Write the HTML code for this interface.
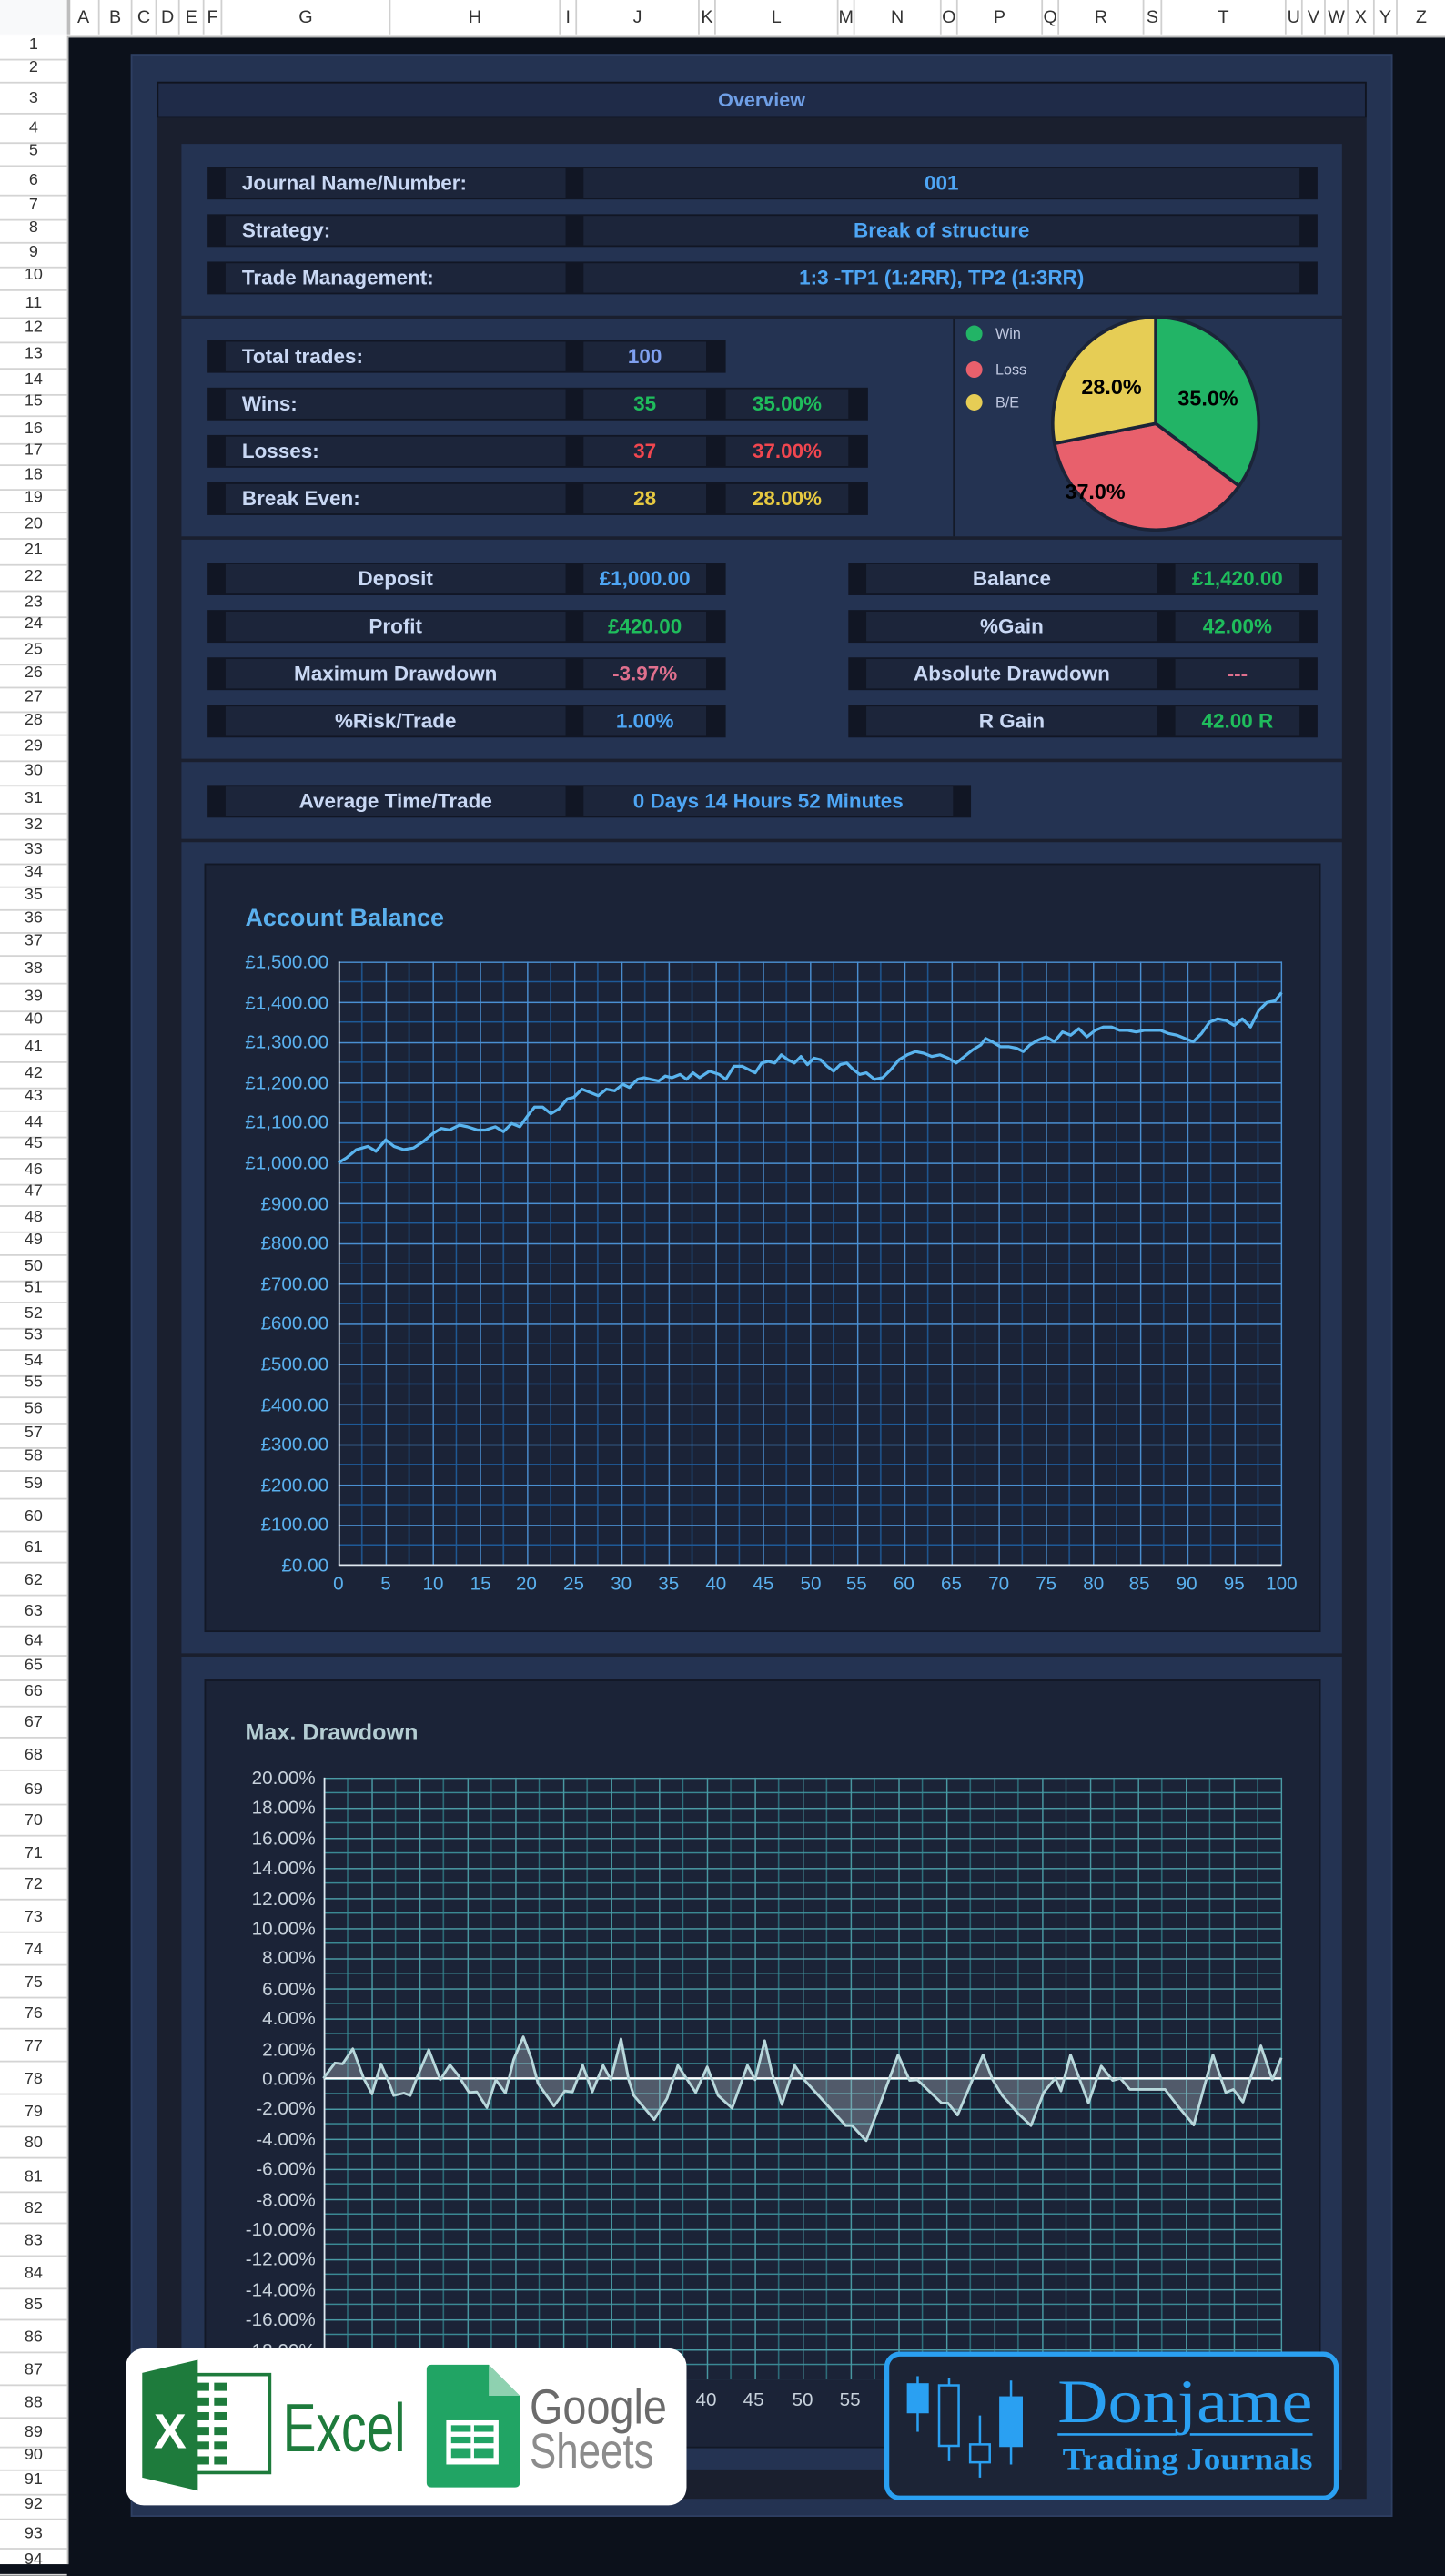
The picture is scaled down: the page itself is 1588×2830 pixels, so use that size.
<!DOCTYPE html>
<html><head><meta charset="utf-8">
<style>
html,body{margin:0;padding:0;width:1588px;height:2817px;overflow:hidden;background:#0c111b;}
#w{position:absolute;left:0;top:0;width:884px;height:1568px;transform:scale(1.79638,1.7966);transform-origin:0 0;font-family:"Liberation Sans Narrow","Liberation Sans",Arial,sans-serif;}
.a{position:absolute;}
.ch{position:absolute;top:0;height:21px;line-height:22px;text-align:center;font-size:11px;color:#333;border-right:1px solid #d0d0d0;font-family:"Liberation Sans Narrow","Liberation Sans",sans-serif;}
.rh{position:absolute;left:0;width:41px;height:16px;line-height:16px;text-align:center;font-size:10px;color:#333;border-bottom:1px solid #d4d4d4;}
.row{position:absolute;height:20px;background:#111624;}
.b{position:absolute;top:1px;bottom:1px;background:#1c253a;display:flex;align-items:center;justify-content:center;font-weight:bold;font-size:12.5px;color:#c9d8f4;white-space:nowrap;}
.l{justify-content:flex-start;padding-left:10px;box-sizing:border-box;}
.sec{position:absolute;left:111px;width:710px;background:#243352;}
.blue{color:#4ea6f5}.grn{color:#1fbd5c}.red{color:#f0464f}.yel{color:#e6c940}
</style></head><body><div id="w">
<!-- column header -->
<div class="a" style="left:0;top:0;width:884px;height:22px;background:#fff;border-bottom:1px solid #bdbdbd;"></div>
<div class="a" style="left:0;top:0;width:41px;height:21px;background:#f8f9fa;border-right:2px solid #bdbdbd;"></div>
<div class="ch" style="left:42px;width:18px">A</div>
<div class="ch" style="left:61px;width:19px">B</div>
<div class="ch" style="left:81px;width:14px">C</div>
<div class="ch" style="left:96px;width:13px">D</div>
<div class="ch" style="left:110px;width:14px">E</div>
<div class="ch" style="left:125px;width:10px">F</div>
<div class="ch" style="left:136px;width:102px">G</div>
<div class="ch" style="left:239px;width:103px">H</div>
<div class="ch" style="left:343px;width:9px">I</div>
<div class="ch" style="left:353px;width:74px">J</div>
<div class="ch" style="left:428px;width:9px">K</div>
<div class="ch" style="left:438px;width:74px">L</div>
<div class="ch" style="left:513px;width:9px">M</div>
<div class="ch" style="left:523px;width:52px">N</div>
<div class="ch" style="left:576px;width:9px">O</div>
<div class="ch" style="left:586px;width:51px">P</div>
<div class="ch" style="left:638px;width:9px">Q</div>
<div class="ch" style="left:648px;width:51px">R</div>
<div class="ch" style="left:700px;width:10px">S</div>
<div class="ch" style="left:711px;width:75px">T</div>
<div class="ch" style="left:787px;width:9px">U</div>
<div class="ch" style="left:797px;width:13px">V</div>
<div class="ch" style="left:811px;width:13px">W</div>
<div class="ch" style="left:825px;width:15px">X</div>
<div class="ch" style="left:841px;width:13px">Y</div>
<div class="ch" style="left:855px;width:29px;border-right:0">Z</div>
<!-- row header -->
<div class="a" style="left:0;top:22px;width:41px;height:1546px;background:#fff;border-right:1px solid #bdbdbd;"></div>
<div class="rh" style="top:20px">1</div><div class="rh" style="top:34px">2</div><div class="rh" style="top:53px">3</div><div class="rh" style="top:71px">4</div><div class="rh" style="top:85px">5</div><div class="rh" style="top:103px">6</div><div class="rh" style="top:118px">7</div><div class="rh" style="top:132px">8</div><div class="rh" style="top:147px">9</div><div class="rh" style="top:161px">10</div>
<div class="rh" style="top:178px">11</div><div class="rh" style="top:193px">12</div><div class="rh" style="top:209px">13</div><div class="rh" style="top:225px">14</div><div class="rh" style="top:238px">15</div><div class="rh" style="top:255px">16</div><div class="rh" style="top:268px">17</div><div class="rh" style="top:283px">18</div><div class="rh" style="top:297px">19</div><div class="rh" style="top:313px">20</div>
<div class="rh" style="top:329px">21</div><div class="rh" style="top:345px">22</div><div class="rh" style="top:361px">23</div><div class="rh" style="top:374px">24</div><div class="rh" style="top:390px">25</div><div class="rh" style="top:404px">26</div><div class="rh" style="top:419px">27</div><div class="rh" style="top:433px">28</div><div class="rh" style="top:449px">29</div><div class="rh" style="top:464px">30</div>
<div class="rh" style="top:481px">31</div><div class="rh" style="top:497px">32</div><div class="rh" style="top:512px">33</div><div class="rh" style="top:526px">34</div><div class="rh" style="top:540px">35</div><div class="rh" style="top:554px">36</div><div class="rh" style="top:568px">37</div><div class="rh" style="top:585px">38</div><div class="rh" style="top:602px">39</div><div class="rh" style="top:616px">40</div>
<div class="rh" style="top:633px">41</div><div class="rh" style="top:649px">42</div><div class="rh" style="top:663px">43</div><div class="rh" style="top:679px">44</div><div class="rh" style="top:692px">45</div><div class="rh" style="top:708px">46</div><div class="rh" style="top:721px">47</div><div class="rh" style="top:737px">48</div><div class="rh" style="top:751px">49</div><div class="rh" style="top:767px">50</div>
<div class="rh" style="top:780px">51</div><div class="rh" style="top:796px">52</div><div class="rh" style="top:809px">53</div><div class="rh" style="top:825px">54</div><div class="rh" style="top:838px">55</div><div class="rh" style="top:854px">56</div><div class="rh" style="top:869px">57</div><div class="rh" style="top:883px">58</div><div class="rh" style="top:900px">59</div><div class="rh" style="top:920px">60</div>
<div class="rh" style="top:939px">61</div><div class="rh" style="top:959px">62</div><div class="rh" style="top:978px">63</div><div class="rh" style="top:996px">64</div><div class="rh" style="top:1011px">65</div><div class="rh" style="top:1027px">66</div><div class="rh" style="top:1046px">67</div><div class="rh" style="top:1066px">68</div><div class="rh" style="top:1087px">69</div><div class="rh" style="top:1106px">70</div>
<div class="rh" style="top:1126px">71</div><div class="rh" style="top:1145px">72</div><div class="rh" style="top:1165px">73</div><div class="rh" style="top:1185px">74</div><div class="rh" style="top:1205px">75</div><div class="rh" style="top:1224px">76</div><div class="rh" style="top:1244px">77</div><div class="rh" style="top:1264px">78</div><div class="rh" style="top:1284px">79</div><div class="rh" style="top:1303px">80</div>
<div class="rh" style="top:1324px">81</div><div class="rh" style="top:1343px">82</div><div class="rh" style="top:1363px">83</div><div class="rh" style="top:1383px">84</div><div class="rh" style="top:1402px">85</div><div class="rh" style="top:1422px">86</div><div class="rh" style="top:1442px">87</div><div class="rh" style="top:1462px">88</div><div class="rh" style="top:1480px">89</div><div class="rh" style="top:1494px">90</div>
<div class="rh" style="top:1509px">91</div><div class="rh" style="top:1524px">92</div><div class="rh" style="top:1542px">93</div><div class="rh" style="top:1558px">94</div>

<!-- outer panel -->
<div class="a" style="left:80px;top:33px;width:770px;height:1504px;background:#243352;border:1px solid #2e3f62;"></div>
<div class="a" style="left:96px;top:50px;width:740px;height:1478px;background:#1a1f2e;"></div>
<div class="a" style="left:96px;top:50px;width:740px;height:22px;background:#1f2b48;border:1px solid #10141f;box-sizing:border-box;color:#6f9fe6;font-weight:bold;font-size:12px;line-height:21px;text-align:center;font-family:'Liberation Sans',sans-serif;">Overview</div>

<div class="sec" style="top:88px;height:105px;"></div>
<div class="sec" style="top:195px;height:133px;"></div>
<div class="sec" style="top:330px;height:134px;"></div>
<div class="sec" style="top:466px;height:47px;"></div>
<div class="sec" style="top:515px;height:496px;"></div>
<div class="sec" style="top:1013px;height:497px;"></div>
<div class="a" style="left:583px;top:195px;width:1px;height:133px;background:#141a28;"></div>

<!-- section 1 -->
<div class="row" style="left:127px;top:102px;width:679px"><div class="b l" style="left:11px;width:208px">Journal Name/Number:</div><div class="b blue" style="left:230px;width:438px">001</div></div>
<div class="row" style="left:127px;top:131px;width:679px"><div class="b l" style="left:11px;width:208px">Strategy:</div><div class="b blue" style="left:230px;width:438px">Break of structure</div></div>
<div class="row" style="left:127px;top:160px;width:679px"><div class="b l" style="left:11px;width:208px">Trade Management:</div><div class="b blue" style="left:230px;width:438px">1:3 -TP1 (1:2RR), TP2 (1:3RR)</div></div>

<!-- section 2 -->
<div class="row" style="left:127px;top:208px;width:317px"><div class="b l" style="left:11px;width:208px">Total trades:</div><div class="b" style="left:230px;width:75px;color:#7fa0f0">100</div></div>
<div class="row" style="left:127px;top:237px;width:404px"><div class="b l" style="left:11px;width:208px">Wins:</div><div class="b grn" style="left:230px;width:75px">35</div><div class="b grn" style="left:317px;width:75px">35.00%</div></div>
<div class="row" style="left:127px;top:266px;width:404px"><div class="b l" style="left:11px;width:208px">Losses:</div><div class="b red" style="left:230px;width:75px">37</div><div class="b red" style="left:317px;width:75px">37.00%</div></div>
<div class="row" style="left:127px;top:295px;width:404px"><div class="b l" style="left:11px;width:208px">Break Even:</div><div class="b yel" style="left:230px;width:75px">28</div><div class="b yel" style="left:317px;width:75px">28.00%</div></div>

<!-- section 3 -->
<div class="row" style="left:127px;top:344px;width:317px"><div class="b" style="left:11px;width:208px">Deposit</div><div class="b blue" style="left:230px;width:75px">£1,000.00</div></div>
<div class="row" style="left:127px;top:373px;width:317px"><div class="b" style="left:11px;width:208px">Profit</div><div class="b grn" style="left:230px;width:75px">£420.00</div></div>
<div class="row" style="left:127px;top:402px;width:317px"><div class="b" style="left:11px;width:208px">Maximum Drawdown</div><div class="b" style="left:230px;width:75px;color:#e0708e">-3.97%</div></div>
<div class="row" style="left:127px;top:431px;width:317px"><div class="b" style="left:11px;width:208px">%Risk/Trade</div><div class="b blue" style="left:230px;width:75px">1.00%</div></div>
<div class="row" style="left:519px;top:344px;width:287px"><div class="b" style="left:11px;width:178px">Balance</div><div class="b grn" style="left:200px;width:76px">£1,420.00</div></div>
<div class="row" style="left:519px;top:373px;width:287px"><div class="b" style="left:11px;width:178px">%Gain</div><div class="b grn" style="left:200px;width:76px">42.00%</div></div>
<div class="row" style="left:519px;top:402px;width:287px"><div class="b" style="left:11px;width:178px">Absolute Drawdown</div><div class="b" style="left:200px;width:76px;color:#e0708e">---</div></div>
<div class="row" style="left:519px;top:431px;width:287px"><div class="b" style="left:11px;width:178px">R Gain</div><div class="b grn" style="left:200px;width:76px">42.00 R</div></div>

<!-- section 4 -->
<div class="row" style="left:127px;top:480px;width:467px"><div class="b" style="left:11px;width:208px">Average Time/Trade</div><div class="b blue" style="left:230px;width:226px">0 Days 14 Hours 52 Minutes</div></div>

<!-- chart boxes -->
<div class="a" style="left:125px;top:528px;width:683px;height:470px;background:#1b2337;border:1px solid #121826;box-sizing:border-box;"></div>
<div class="a" style="left:125px;top:1027px;width:683px;height:470px;background:#1b2337;border:1px solid #121826;box-sizing:border-box;"></div>

<svg class="a" style="left:0;top:0" width="884" height="1568" viewBox="0 0 884 1568">
<defs>
<pattern id="g1" patternUnits="userSpaceOnUse" x="207" y="588" width="28.85" height="24.6">
<line x1="14.425" y1="0" x2="14.425" y2="24.6" stroke="#1e5a98" stroke-width="0.8"/>
<line x1="0" y1="12.3" x2="28.85" y2="12.3" stroke="#1e5a98" stroke-width="0.8"/>
<line x1="0.4" y1="0" x2="0.4" y2="24.6" stroke="#4a8fd2" stroke-width="0.8"/>
<line x1="0" y1="0.4" x2="28.85" y2="0.4" stroke="#4a8fd2" stroke-width="0.8"/>
</pattern>
<pattern id="g2" patternUnits="userSpaceOnUse" x="198" y="1087" width="29.3" height="18.4">
<line x1="14.65" y1="0" x2="14.65" y2="18.4" stroke="#2f7480" stroke-width="0.8"/>
<line x1="0" y1="9.2" x2="29.3" y2="9.2" stroke="#3a8994" stroke-width="0.8"/>
<line x1="0.4" y1="0" x2="0.4" y2="18.4" stroke="#4a9aa4" stroke-width="0.8"/>
<line x1="0" y1="0.4" x2="29.3" y2="0.4" stroke="#4a9aa4" stroke-width="0.8"/>
</pattern>
</defs>
<!-- pie -->
<g stroke="#1b2438" stroke-width="2">
<path d="M707,259 L707,194 A63,65 0 0 1 758,297.2 Z" fill="#22b466"/>
<path d="M707,259 L758,297.2 A63,65 0 0 1 645.1,271.2 Z" fill="#e8606c"/>
<path d="M707,259 L645.1,271.2 A63,65 0 0 1 707,194 Z" fill="#e6cd55"/>
</g>
<g font-family="Liberation Sans Narrow, Liberation Sans, sans-serif" font-weight="bold" font-size="13" fill="#000" text-anchor="middle">
<text x="739" y="248">35.0%</text><text x="670" y="305">37.0%</text><text x="680" y="241">28.0%</text>
</g>
<circle cx="596" cy="204" r="5" fill="#22b466"/><circle cx="596" cy="226" r="5" fill="#e8606c"/><circle cx="596" cy="246" r="5" fill="#e6cd55"/>
<g font-family="Liberation Sans, sans-serif" font-size="9" fill="#c0c8e0"><text x="609" y="207">Win</text><text x="609" y="229">Loss</text><text x="609" y="249">B/E</text></g>

<!-- chart1 -->
<text x="150" y="566" font-family="Liberation Sans, sans-serif" font-weight="bold" font-size="15" fill="#5ab0ee">Account Balance</text>
<rect x="207" y="588" width="577" height="369" fill="url(#g1)"/>
<line x1="784" y1="588" x2="784" y2="957" stroke="#4a8fd2" stroke-width="0.8"/>
<line x1="207.5" y1="588" x2="207.5" y2="957" stroke="#e0e8f0" stroke-width="1"/>
<line x1="207" y1="957" x2="784" y2="957" stroke="#e0e8f0" stroke-width="1"/>
<g font-family="Liberation Sans Narrow, Liberation Sans, sans-serif" font-size="11.5" fill="#5ab0ee" text-anchor="end">
<text x="201" y="592">£1,500.00</text><text x="201" y="617">£1,400.00</text><text x="201" y="641">£1,300.00</text><text x="201" y="666">£1,200.00</text><text x="201" y="690">£1,100.00</text><text x="201" y="715">£1,000.00</text><text x="201" y="740">£900.00</text><text x="201" y="764">£800.00</text><text x="201" y="789">£700.00</text><text x="201" y="813">£600.00</text><text x="201" y="838">£500.00</text><text x="201" y="863">£400.00</text><text x="201" y="887">£300.00</text><text x="201" y="912">£200.00</text><text x="201" y="936">£100.00</text><text x="201" y="961">£0.00</text>
</g>
<g font-family="Liberation Sans Narrow, Liberation Sans, sans-serif" font-size="11.5" fill="#5ab0ee" text-anchor="middle">
<text x="207" y="972">0</text><text x="236" y="972">5</text><text x="265" y="972">10</text><text x="294" y="972">15</text><text x="322" y="972">20</text><text x="351" y="972">25</text><text x="380" y="972">30</text><text x="409" y="972">35</text><text x="438" y="972">40</text><text x="467" y="972">45</text><text x="496" y="972">50</text><text x="524" y="972">55</text><text x="553" y="972">60</text><text x="582" y="972">65</text><text x="611" y="972">70</text><text x="640" y="972">75</text><text x="669" y="972">80</text><text x="697" y="972">85</text><text x="726" y="972">90</text><text x="755" y="972">95</text><text x="784" y="972">100</text>
</g>
<polyline fill="none" stroke="#5ab4ee" stroke-width="1.8" stroke-linejoin="round" points="207,711 212,708 218,703 225,701 230,704 236,697 241,701 247,703 253,702 259,698 265,693 270,690 275,691 281,688 286,689 292,691 297,691 303,689 308,692 313,687 318,689 323,682 327,677 332,677 337,681 342,678 347,672 351,671 356,666 361,668 366,670 371,666 376,667 381,663 385,665 390,660 394,659 398,660 403,661 407,658 411,659 416,657 420,660 424,656 428,659 434,655 440,657 444,660 449,652 454,652 458,654 462,656 466,650 470,649 474,650 478,645 482,648 486,650 490,646 494,651 498,647 502,648 506,652 510,655 514,651 518,650 522,654 526,657 530,656 535,660 540,659 545,654 550,648 555,645 560,643 565,644 570,646 575,645 580,647 585,650 590,646 595,642 600,639 603,635 607,637 612,640 617,640 622,641 626,643 630,639 635,636 640,634 645,637 650,631 655,633 660,629 665,634 670,630 675,628 680,628 685,630 690,630 695,631 700,630 705,630 710,630 715,632 720,633 725,635 730,637 735,632 740,625 745,623 750,624 755,627 760,623 765,628 770,618 775,613 780,612 784,607"/>

<!-- chart2 -->
<text x="150" y="1064" font-family="Liberation Sans, sans-serif" font-weight="bold" font-size="14" fill="#b4cdd3">Max. Drawdown</text>
<rect x="198" y="1087" width="586" height="368" fill="url(#g2)"/>
<line x1="784" y1="1087" x2="784" y2="1455" stroke="#4a9aa4" stroke-width="0.8"/>
<line x1="198.5" y1="1087" x2="198.5" y2="1455" stroke="#e0e8f0" stroke-width="1"/>
<g font-family="Liberation Sans Narrow, Liberation Sans, sans-serif" font-size="11.5" fill="#c8d2dc" text-anchor="end">
<text x="193" y="1091">20.00%</text><text x="193" y="1109">18.00%</text><text x="193" y="1128">16.00%</text><text x="193" y="1146">14.00%</text><text x="193" y="1165">12.00%</text><text x="193" y="1183">10.00%</text><text x="193" y="1201">8.00%</text><text x="193" y="1220">6.00%</text><text x="193" y="1238">4.00%</text><text x="193" y="1257">2.00%</text><text x="193" y="1275">0.00%</text><text x="193" y="1293">-2.00%</text><text x="193" y="1312">-4.00%</text><text x="193" y="1330">-6.00%</text><text x="193" y="1349">-8.00%</text><text x="193" y="1367">-10.00%</text><text x="193" y="1385">-12.00%</text><text x="193" y="1404">-14.00%</text><text x="193" y="1422">-16.00%</text><text x="193" y="1441">-18.00%</text><text x="193" y="1459">-20.00%</text>
</g>
<g font-family="Liberation Sans Narrow, Liberation Sans, sans-serif" font-size="11.5" fill="#c8d2dc" text-anchor="middle">
<text x="432" y="1471">40</text><text x="461" y="1471">45</text><text x="491" y="1471">50</text><text x="520" y="1471">55</text>
</g>
<g transform="matrix(0.39065 0 0 0.18426 189.27 1213.2)">
<polygon fill="#b8c4cc" fill-opacity="0.35" points="22,313 40,262 52,265 68,215 85,313 98,365 112,265 122,313 132,370 148,362 158,370 168,313 187,218 205,318 220,268 232,300 250,360 262,358 278,410 292,318 307,362 320,250 335,175 348,250 358,330 383,405 400,355 412,358 428,270 443,358 460,270 472,318 488,182 500,318 508,370 540,450 560,380 577,270 605,360 623,275 640,370 662,412 686,270 698,318 713,188 725,300 740,400 760,270 775,318 840,470 850,470 872,520 890,420 922,235 940,320 952,318 990,395 1000,395 1015,435 1055,235 1070,318 1085,370 1110,430 1130,470 1150,360 1168,313 1177,355 1192,235 1220,395 1240,272 1258,320 1270,313 1285,350 1340,350 1360,405 1385,468 1415,235 1435,360 1447,350 1462,392 1490,205 1508,318 1522,245 1522,313"/>
<line x1="22" y1="313" x2="1522" y2="313" stroke="#ffffff" stroke-width="1.3" vector-effect="non-scaling-stroke"/>
<polyline fill="none" stroke="#b9d8dc" stroke-width="1.6" stroke-linejoin="round" vector-effect="non-scaling-stroke" points="22,313 40,262 52,265 68,215 85,313 98,365 112,265 122,313 132,370 148,362 158,370 168,313 187,218 205,318 220,268 232,300 250,360 262,358 278,410 292,318 307,362 320,250 335,175 348,250 358,330 383,405 400,355 412,358 428,270 443,358 460,270 472,318 488,182 500,318 508,370 540,450 560,380 577,270 605,360 623,275 640,370 662,412 686,270 698,318 713,188 725,300 740,400 760,270 775,318 840,470 850,470 872,520 890,420 922,235 940,320 952,318 990,395 1000,395 1015,435 1055,235 1070,318 1085,370 1110,430 1130,470 1150,360 1168,313 1177,355 1192,235 1220,395 1240,272 1258,320 1270,313 1285,350 1340,350 1360,405 1385,468 1415,235 1435,360 1447,350 1462,392 1490,205 1508,318 1522,245"/>
</g>

<!-- logos -->
<rect x="77" y="1436" width="343" height="96" rx="11" fill="#ffffff"/>
<rect x="116" y="1452" width="49" height="60" fill="#fff" stroke="#1e7b3c" stroke-width="2"/>
<g fill="#1e7b3c">
<rect x="120" y="1457" width="8" height="5"/><rect x="131" y="1457" width="8" height="5"/>
<rect x="120" y="1466" width="8" height="5"/><rect x="131" y="1466" width="8" height="5"/>
<rect x="120" y="1475" width="8" height="5"/><rect x="131" y="1475" width="8" height="5"/>
<rect x="120" y="1484" width="8" height="5"/><rect x="131" y="1484" width="8" height="5"/>
<rect x="120" y="1493" width="8" height="5"/><rect x="131" y="1493" width="8" height="5"/>
<rect x="120" y="1502" width="8" height="5"/><rect x="131" y="1502" width="8" height="5"/>
</g>
<polygon points="87,1451 121,1443 121,1523 87,1515" fill="#1e7b3c"/>
<text x="104" y="1497" text-anchor="middle" font-family="Liberation Sans Narrow, Liberation Sans, sans-serif" font-weight="bold" font-size="30" fill="#fff">X</text>
<text x="173" y="1499" textLength="75" lengthAdjust="spacingAndGlyphs" font-family="Liberation Sans Narrow, Liberation Sans, sans-serif" font-size="42" fill="#1e7b3c">Excel</text>
<path d="M264,1446 L299,1446 L318,1465 L318,1518 Q318,1521 315,1521 L264,1521 Q261,1521 261,1518 L261,1449 Q261,1446 264,1446 Z" fill="#21a464"/>
<path d="M299,1446 L318,1465 L299,1465 Z" fill="#8ed1b0"/>
<rect x="273" y="1480" width="32" height="27" fill="#fff"/>
<g fill="#21a464"><rect x="276" y="1483" width="12" height="4"/><rect x="290" y="1483" width="12" height="4"/><rect x="276" y="1490" width="12" height="4"/><rect x="290" y="1490" width="12" height="4"/><rect x="276" y="1497" width="12" height="6"/><rect x="290" y="1497" width="12" height="6"/></g>
<text x="324" y="1482" textLength="84" lengthAdjust="spacingAndGlyphs" font-family="Liberation Sans, sans-serif" font-size="30" fill="#6b6b6b">Google</text>
<text x="324" y="1509" textLength="76" lengthAdjust="spacingAndGlyphs" font-family="Liberation Sans, sans-serif" font-size="30" fill="#8c8c8c">Sheets</text>

<rect x="542.5" y="1439.5" width="275" height="88" rx="8" fill="#1c2436" stroke="#2aa0f2" stroke-width="3"/>
<g stroke="#2aa0f2" stroke-width="1.4" fill="none">
<line x1="561.4" y1="1453" x2="561.4" y2="1487"/><rect x="555.5" y="1458" width="12" height="17" fill="#2aa0f2"/>
<line x1="580.6" y1="1454" x2="580.6" y2="1505"/><rect x="574.5" y="1458.6" width="12" height="37" fill="#1c2436"/>
<line x1="599.5" y1="1477" x2="599.5" y2="1515"/><rect x="593.5" y="1494.7" width="12" height="11" fill="#1c2436"/>
<line x1="618.5" y1="1455.7" x2="618.5" y2="1507"/><rect x="612" y="1466" width="13" height="29.6" fill="#2aa0f2"/>
</g>
<text x="647" y="1481" textLength="156" lengthAdjust="spacingAndGlyphs" font-family="Liberation Serif, serif" font-size="38" fill="#2aa0f2">Donjame</text>
<line x1="647" y1="1488.6" x2="720" y2="1488.6" stroke="#2aa0f2" stroke-width="1.5"/>
<line x1="728" y1="1488.6" x2="803" y2="1488.6" stroke="#2aa0f2" stroke-width="1.5"/>
<text x="650" y="1509.7" textLength="153" lengthAdjust="spacingAndGlyphs" font-family="Liberation Serif, serif" font-weight="bold" font-size="18" fill="#2aa0f2">Trading Journals</text>
</svg>
</div></body></html>
